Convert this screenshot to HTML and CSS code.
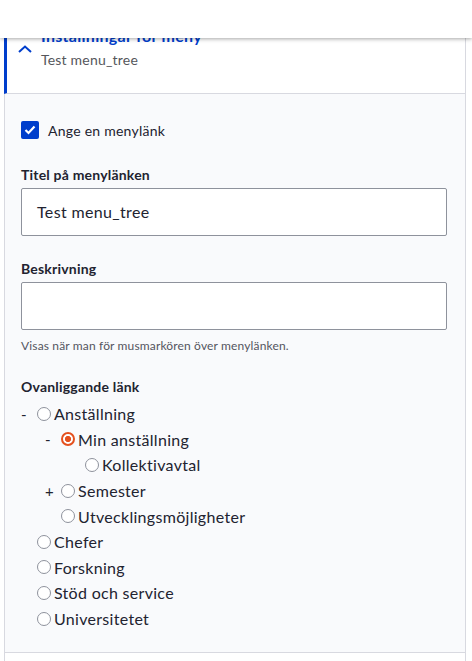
FILE: index.html
```html
<!DOCTYPE html>
<html lang="sv">
<head>
<meta charset="utf-8">
<link rel="stylesheet" href="styles.css">
</head>
<body>
<header class="topbar"></header>
<main class="page">
  <section class="card">
    <div class="summary">
      <svg class="chevron" width="14" height="8" viewBox="0 0 14 8"><path d="M1 7 L7 1.5 L13 7" fill="none" stroke="#003ecc" stroke-width="2"/></svg>
      <div class="summary-text">
        <div class="summary-title">Inställningar för meny</div>
        <div class="summary-sub">Test menu_tree</div>
      </div>
    </div>
    <div class="content">
      <label class="check-row">
        <span class="checkbox"><svg width="12" height="10" viewBox="0 0 12 10"><path d="M1.5 5 L4.5 8 L10.5 1.5" fill="none" stroke="#fff" stroke-width="2.2"/></svg></span>
        <span>Ange en menylänk</span>
      </label>

      <div class="field">
        <div class="label">Titel på menylänken</div>
        <div class="input">Test menu_tree</div>
      </div>

      <div class="field">
        <div class="label">Beskrivning</div>
        <div class="input"></div>
        <div class="desc">Visas när man för musmarkören över menylänken.</div>
      </div>

      <div class="field">
        <div class="label label-tree">Ovanliggande länk</div>
        <ul class="tree">
          <li class="row"><span class="tog">-</span><span class="radio"></span>Anställning</li>
          <li class="row lvl2"><span class="tog">-</span><span class="radio on"></span>Min anställning</li>
          <li class="row lvl3"><span class="tog"></span><span class="radio"></span>Kollektivavtal</li>
          <li class="row lvl2"><span class="tog">+</span><span class="radio"></span>Semester</li>
          <li class="row lvl2"><span class="tog"></span><span class="radio"></span>Utvecklingsmöjligheter</li>
          <li class="row"><span class="tog"></span><span class="radio"></span>Chefer</li>
          <li class="row"><span class="tog"></span><span class="radio"></span>Forskning</li>
          <li class="row"><span class="tog"></span><span class="radio"></span>Stöd och service</li>
          <li class="row"><span class="tog"></span><span class="radio"></span>Universitetet</li>
        </ul>
      </div>
    </div>
    <div class="next"></div>
  </section>
</main>
</body>
</html>
```
FILE: styles.css
```css
* { box-sizing: border-box; }
html, body { margin: 0; padding: 0; background: #fff; }
body {
  font-family: Lato, "Liberation Sans", sans-serif;
  color: #222330;
  overflow: hidden;
  height: 661px;
}
.topbar {
  position: fixed;
  top: 0; left: 0; right: 0;
  height: 38px;
  background: #fff;
  box-shadow: 0 1px 4px rgba(0,0,0,0.35);
  z-index: 10;
}
.page {
  padding-left: 4px;
  padding-top: 12px;
}
.card {
  width: 462px;
  border-left: 1px solid #d8d9e0;
  border-right: 1px solid #d8d9e0;
  background: #f9fafc;
}
.summary {
  display: flex;
  align-items: flex-start;
  background: #fff;
  margin-left: -1px;
  border-left: 3px solid #003ecc;
  border-bottom: 1px solid #d8d9e0;
  padding: 12px 0 21px 0;
}
.chevron { margin: 21px 0 0 11px; flex: none; }
.summary-text { margin-left: 9px; }
.summary-title {
  color: #003ecc;
  font-weight: 700;
  font-size: 16px;
  line-height: 24px;
  letter-spacing: 0.3px;
}
.summary-sub {
  color: #55565b;
  font-size: 14px;
  line-height: 24px;
  letter-spacing: 0.2px;
}
.content {
  padding: 24px 18px 21px 16px;
  border-bottom: 1px solid #d8d9e0;
}
.check-row {
  display: flex;
  align-items: center;
  height: 24px;
  font-size: 14px;
  gap: 9px;
  letter-spacing: 0.25px;
}
.checkbox {
  width: 18px; height: 18px;
  border-radius: 2px;
  background: #003ecc;
  display: flex; align-items: center; justify-content: center;
}
.field { margin-top: 24px; }
.label {
  font-size: 14px;
  font-weight: 700;
  line-height: 18px;
  margin-bottom: 4px;
  letter-spacing: 0.2px;
}
.input {
  height: 48px;
  background: #fff;
  border: 1px solid #8e929c;
  border-radius: 2px;
  font-size: 16px;
  line-height: 46px;
  padding-left: 15px;
  letter-spacing: 0.35px;
}
.desc {
  margin-top: 7px;
  font-size: 12px;
  line-height: 17px;
  color: #545560;
  letter-spacing: 0.15px;
}
.label-tree { margin-bottom: 5px; }
.tree { list-style: none; margin: 0; padding: 0; }
.row {
  display: flex;
  align-items: center;
  height: 25.6px;
  font-size: 16px;
  letter-spacing: 0.3px;
}
.lvl2 { padding-left: 24px; }
.lvl3 { padding-left: 48px; }
.tog { width: 16px; flex: none; font-size: 15px; }
.radio {
  width: 14px; height: 14px;
  border: 1.5px solid #8e929c;
  border-radius: 50%;
  background: #fff;
  margin-right: 3px;
  flex: none;
}
.radio.on {
  border: 2px solid #e4501e;
  background: radial-gradient(circle, #e4501e 0 2.8px, #fff 3.3px);
}
.next { height: 10px; background: #fff; }
```
